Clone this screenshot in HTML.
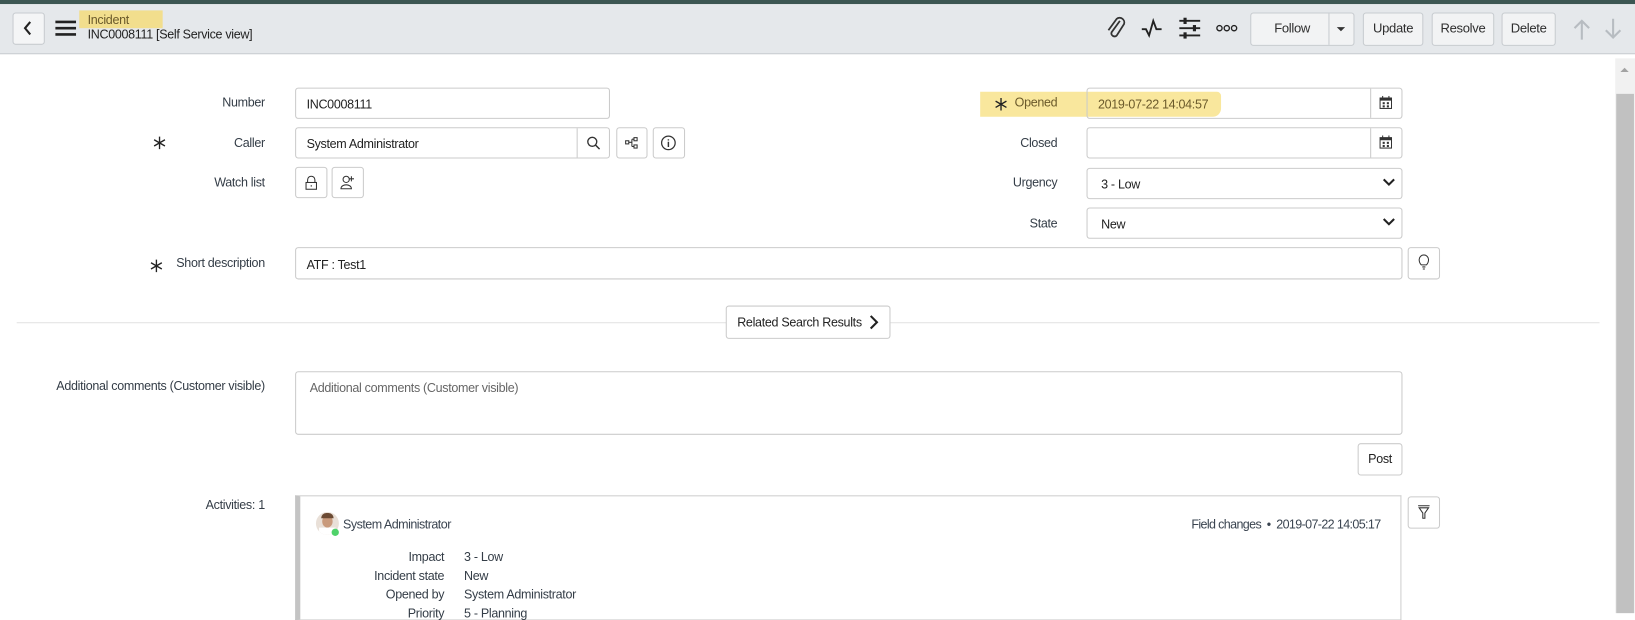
<!DOCTYPE html>
<html><head><meta charset="utf-8"><style>
html,body{margin:0;padding:0;overflow:hidden;background:#fff}
#w{position:absolute;left:0;top:0;width:1568px;height:588px;transform:scale(1.04273);transform-origin:0 0;font-family:"Liberation Sans",sans-serif;font-size:12px;color:#343d47;letter-spacing:-0.3px}
.a{position:absolute}
.b{position:absolute;border:1px solid #cbcbcb;border-radius:3px;background:#fff;box-sizing:border-box}
.hb{position:absolute;border:1px solid #c8ccd0;border-radius:3px;background:#f2f3f4;box-sizing:border-box;text-align:center;line-height:29px;font-size:12.5px;color:#2e2e2e}
.l{position:absolute;text-align:right;width:300px}
.t{position:absolute;left:10px}
.st{position:absolute;font-size:22px;color:#222;font-weight:300;line-height:20px}
svg{position:absolute}
</style></head><body><div id="w">
<div class="a" style="left:0;top:0;width:1568px;height:4px;background:#3c5652"></div>
<div class="a" style="left:0;top:4px;width:1568px;height:47px;background:#e5e8eb;border-bottom:1px solid #c9cdd1"></div>
<div class="hb" style="left:12px;top:12px;width:31px;height:31px;background:#f4f5f6"></div>
<svg style="left:20px;top:18px" width="14" height="18"><path d="M9 3 L4 9 L9 15" stroke="#222" stroke-width="2" fill="none"/></svg>
<svg style="left:53px;top:19px" width="20" height="16"><path d="M0 2H20M0 8H20M0 14H20" stroke="#222" stroke-width="2.5"/></svg>
<div class="a" style="left:76px;top:10px;width:80px;height:17px;background:#f5dc7d;opacity:.85"></div>
<div class="a" style="left:84px;top:12px;color:#6b5a2b">Incident</div>
<div class="a" style="left:84px;top:26px;color:#222">INC0008111 [Self Service view]</div>
<svg style="left:1059px;top:15px" width="22" height="24"><path d="M15 5 L7 16 a3 3 0 0 0 5 3 L19 8 a4.5 4.5 0 0 0 -7 -5 L4 14" stroke="#333" stroke-width="1.7" fill="none"/></svg>
<svg style="left:1094px;top:17px" width="22" height="20"><path d="M1 11 H5 L8 17 L12 3 L15 11 H20" stroke="#222" stroke-width="1.8" fill="none"/></svg>
<svg style="left:1130px;top:16px" width="22" height="22"><path d="M1 4H21M1 11H21M1 18H21" stroke="#222" stroke-width="1.8"/><rect x="5" y="1" width="3" height="6" fill="#222"/><rect x="14" y="8" width="3" height="6" fill="#222"/><rect x="5" y="15" width="3" height="6" fill="#222"/></svg>
<svg style="left:1166px;top:23px" width="22" height="8"><circle cx="3.5" cy="4" r="2.5" fill="none" stroke="#222" stroke-width="1.3"/><circle cx="10.5" cy="4" r="2.5" fill="none" stroke="#222" stroke-width="1.3"/><circle cx="17.5" cy="4" r="2.5" fill="none" stroke="#222" stroke-width="1.3"/></svg>
<div class="hb" style="left:1199px;top:12px;width:100px;height:32px"><span style="position:absolute;left:22px">Follow</span></div>
<div class="a" style="left:1274px;top:13px;width:1px;height:30px;background:#c8ccd0"></div>
<svg style="left:1281px;top:25px" width="10" height="6"><path d="M1 1H9L5 5Z" fill="#333"/></svg>
<div class="hb" style="left:1307px;top:12px;width:58px;height:32px">Update</div>
<div class="hb" style="left:1373px;top:12px;width:60px;height:32px">Resolve</div>
<div class="hb" style="left:1440px;top:12px;width:52px;height:32px">Delete</div>
<svg style="left:1507px;top:17px" width="20" height="22"><path d="M10 21V3M3 10L10 3L17 10" stroke="#b7bcc1" stroke-width="2" fill="none"/></svg>
<svg style="left:1537px;top:17px" width="20" height="22"><path d="M10 1V19M3 12L10 19L17 12" stroke="#b7bcc1" stroke-width="2" fill="none"/></svg>
<div class="a" style="left:1549px;top:56px;width:19px;height:532px;background:#f1f1f1"></div>
<div class="a" style="left:1550px;top:90px;width:17px;height:498px;background:#c1c1c1"></div>
<svg style="left:1553px;top:64px" width="10" height="6"><path d="M1 5H9L5 1Z" fill="#a3a3a3"/></svg>

<div class="l" style="left:-46px;top:91px">Number</div>
<div class="b" style="left:283px;top:84px;width:302px;height:30px"><span class="t" style="top:8px;color:#222">INC0008111</span></div>
<div class="l" style="left:-46px;top:130px">Caller</div>
<svg style="left:146px;top:130px" width="14" height="14"><path d="M7 1V13M1.8 4L12.2 10M1.8 10L12.2 4" stroke="#222" stroke-width="1.3"/></svg>
<div class="b" style="left:283px;top:122px;width:302px;height:30px"><span class="t" style="top:8px;color:#222">System Administrator</span></div>
<div class="a" style="left:553px;top:123px;width:1px;height:28px;background:#cbcbcb"></div>
<svg style="left:562px;top:130px" width="14" height="14"><circle cx="6" cy="6" r="4.3" stroke="#333" stroke-width="1.3" fill="none"/><path d="M9 9L13 13" stroke="#333" stroke-width="1.4"/></svg>
<div class="b" style="left:591px;top:122px;width:30px;height:30px"></div>
<svg style="left:599px;top:131px" width="14" height="12"><rect x="1" y="4" width="3" height="3" fill="none" stroke="#333"/><rect x="9" y="1" width="3" height="3" fill="none" stroke="#333"/><rect x="9" y="8" width="3" height="3" fill="none" stroke="#333"/><path d="M4 5.5H7M7 2.5V9.5M7 2.5H9M7 9.5H9" stroke="#333"/></svg>
<div class="b" style="left:626px;top:122px;width:31px;height:30px"></div>
<svg style="left:633px;top:129px" width="16" height="16"><circle cx="8" cy="8" r="6.5" stroke="#333" stroke-width="1.2" fill="none"/><path d="M8 7V12M8 4.5V5.8" stroke="#333" stroke-width="1.4"/></svg>
<div class="l" style="left:-46px;top:168px">Watch list</div>
<div class="b" style="left:283px;top:160px;width:31px;height:30px"></div>
<svg style="left:292px;top:168px" width="13" height="15"><path d="M3 7V4.5a3.5 3.5 0 0 1 7 0V7" stroke="#333" fill="none"/><rect x="1.5" y="7" width="10" height="6.5" fill="none" stroke="#333"/><path d="M6.5 9.5V11" stroke="#333"/></svg>
<div class="b" style="left:318px;top:160px;width:31px;height:30px"></div>
<svg style="left:326px;top:167px" width="15" height="15"><circle cx="6" cy="5" r="3" fill="none" stroke="#333"/><path d="M1 14 C1 9 11 9 11 14Z" fill="none" stroke="#333"/><path d="M11 2V7M8.5 4.5H13.5" stroke="#333"/></svg>

<div class="a" style="left:940px;top:88px;width:231px;height:24px;background:#f8e38c;opacity:.85;border-radius:0 4px 8px 0"></div>
<div class="l" style="left:714px;top:91px;color:#6b5a2b">Opened</div>
<svg style="left:953px;top:93px" width="14" height="14"><path d="M7 1V13M1.8 4L12.2 10M1.8 10L12.2 4" stroke="#222" stroke-width="1.3"/></svg>
<div class="b" style="left:1042px;top:84px;width:303px;height:30px;background:transparent"><span class="t" style="top:8px;color:#6b5a2b">2019-07-22 14:04:57</span></div>
<div class="l" style="left:714px;top:130px">Closed</div>
<div class="b" style="left:1042px;top:122px;width:303px;height:30px"></div>
<div class="a" style="left:1314px;top:85px;width:1px;height:28px;background:#cbcbcb"></div>
<div class="a" style="left:1314px;top:123px;width:1px;height:28px;background:#cbcbcb"></div>
<svg style="left:1323px;top:92px" width="12" height="13"><rect x="0.5" y="2" width="11" height="10" fill="none" stroke="#333"/><rect x="0.5" y="2" width="11" height="2.5" fill="#333"/><path d="M3 0V3M9 0V3" stroke="#333"/><rect x="3" y="6" width="2" height="2" fill="#333"/><rect x="7" y="6" width="2" height="2" fill="#333"/><rect x="3" y="9" width="2" height="2" fill="#333"/><rect x="7" y="9" width="2" height="2" fill="#333"/></svg>
<svg style="left:1323px;top:130px" width="12" height="13"><rect x="0.5" y="2" width="11" height="10" fill="none" stroke="#333"/><rect x="0.5" y="2" width="11" height="2.5" fill="#333"/><path d="M3 0V3M9 0V3" stroke="#333"/><rect x="3" y="6" width="2" height="2" fill="#333"/><rect x="7" y="6" width="2" height="2" fill="#333"/><rect x="3" y="9" width="2" height="2" fill="#333"/><rect x="7" y="9" width="2" height="2" fill="#333"/></svg>
<div class="l" style="left:714px;top:168px">Urgency</div>
<div class="b" style="left:1042px;top:161px;width:303px;height:30px"><span class="t" style="left:13px;top:8px;color:#222">3 - Low</span></div>
<svg style="left:1326px;top:171px" width="12" height="8"><path d="M1 1L6 6L11 1" stroke="#222" stroke-width="2" fill="none"/></svg>
<div class="l" style="left:714px;top:207px">State</div>
<div class="b" style="left:1042px;top:199px;width:303px;height:30px"><span class="t" style="left:13px;top:8px;color:#222">New</span></div>
<svg style="left:1326px;top:209px" width="12" height="8"><path d="M1 1L6 6L11 1" stroke="#222" stroke-width="2" fill="none"/></svg>

<div class="l" style="left:-46px;top:245px">Short description</div>
<svg style="left:143px;top:248px" width="14" height="14"><path d="M7 1V13M1.8 4L12.2 10M1.8 10L12.2 4" stroke="#222" stroke-width="1.3"/></svg>
<div class="b" style="left:283px;top:237px;width:1062px;height:31px"><span class="t" style="top:9px;color:#222">ATF : Test1</span></div>
<div class="b" style="left:1350px;top:237px;width:31px;height:31px"></div>
<svg style="left:1360px;top:244px" width="11" height="16"><path d="M3 10C1 8 1 6 1 5a4.5 4.5 0 0 1 9 0c0 1 0 3-2 5Z" fill="none" stroke="#333"/><path d="M4 12H7M4.5 14H6.5" stroke="#333"/></svg>

<div class="a" style="left:16px;top:309px;width:1518px;height:1px;background:#e2e2e2"></div>
<div class="b" style="left:696px;top:293px;width:158px;height:32px"><span class="t" style="top:8px;color:#222">Related Search Results</span></div>
<svg style="left:833px;top:302px" width="10" height="14"><path d="M2 1L8 7L2 13" stroke="#222" stroke-width="2" fill="none"/></svg>

<div class="l" style="left:-46px;top:363px">Additional comments (Customer visible)</div>
<div class="b" style="left:283px;top:356px;width:1062px;height:61px"><span class="t" style="left:13px;top:8px;color:#666">Additional comments (Customer visible)</span></div>
<div class="b" style="left:1302px;top:425px;width:43px;height:31px;text-align:center;line-height:29px;color:#222">Post</div>

<div class="l" style="left:-46px;top:477px">Activities: 1</div>
<div class="a" style="left:283px;top:475px;width:1061px;height:120px;border:1px solid #cfcfcf;border-left:5px solid #c4c4c4;box-sizing:border-box;background:#fff"></div>
<div class="b" style="left:1350px;top:476px;width:31px;height:31px"></div>
<svg style="left:1359px;top:484px" width="13" height="15"><path d="M1 1H12M2 3H11L7.5 8V13H5.5V8Z" fill="none" stroke="#333"/></svg>
<div class="a" style="left:303px;top:491px;width:22px;height:22px;border-radius:50%;background:#e9e0d8;overflow:hidden"><div class="a" style="left:6px;top:3px;width:10px;height:12px;border-radius:50%;background:#c99a7c"></div><div class="a" style="left:5px;top:1px;width:12px;height:5px;border-radius:5px 5px 0 0;background:#6b4a33"></div><div class="a" style="left:3px;top:15px;width:16px;height:8px;background:#fff"></div></div>
<div class="a" style="left:318px;top:507px;width:7px;height:7px;border-radius:50%;background:#4fd26a"></div>
<div class="a" style="left:329px;top:496px;color:#3a4450;letter-spacing:-0.5px">System Administrator</div>
<div class="a" style="left:1024px;width:300px;text-align:right;top:496px;color:#3a4450;letter-spacing:-0.6px">Field changes &nbsp;•&nbsp; 2019-07-22 14:05:17</div>
<div class="l" style="left:126px;top:527px">Impact</div><div class="a" style="left:445px;top:527px">3 - Low</div>
<div class="l" style="left:126px;top:545px">Incident state</div><div class="a" style="left:445px;top:545px">New</div>
<div class="l" style="left:126px;top:563px">Opened by</div><div class="a" style="left:445px;top:563px">System Administrator</div>
<div class="l" style="left:126px;top:581px">Priority</div><div class="a" style="left:445px;top:581px">5 - Planning</div>
</div></body></html>
